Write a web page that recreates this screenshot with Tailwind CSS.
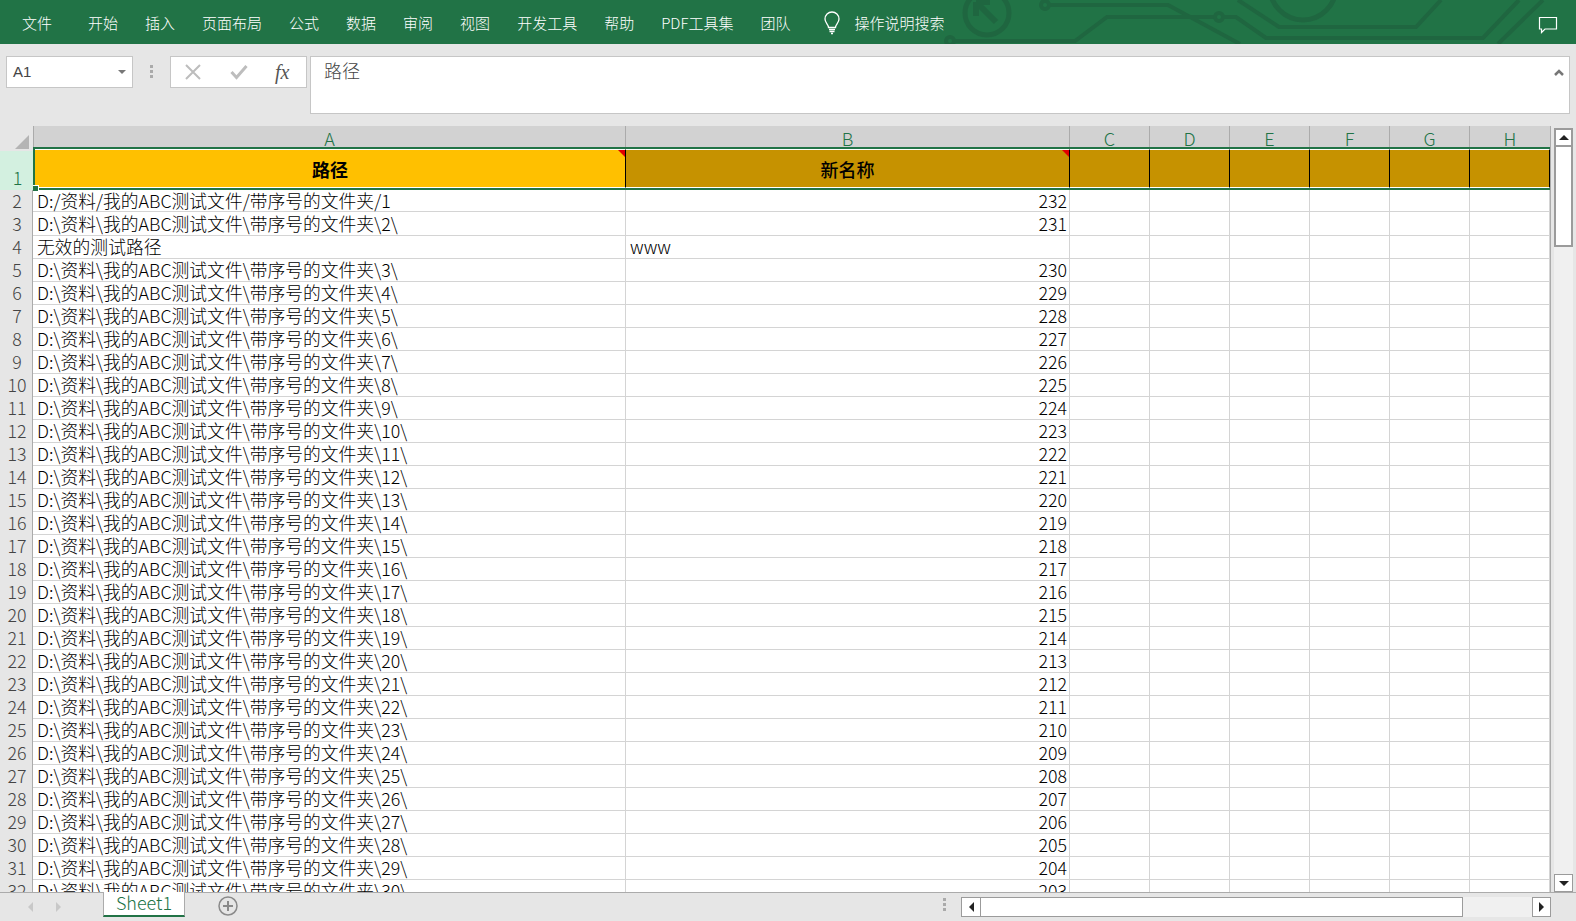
<!DOCTYPE html>
<html lang="zh-CN">
<head>
    <meta charset="UTF-8">
    <meta name="viewport" content="width=device-width, initial-scale=1.0">
    <title>Excel</title>
    <script src="https://cdn.jsdelivr.net/npm/@tailwindcss/browser@4"></script>
</head>
<body class="w-[1576px] h-[921px] overflow-hidden bg-[#e6e6e6] flex flex-col font-['Noto_Sans_CJK_SC',sans-serif] font-light">

    <!-- ribbon tabs -->
    <div class="relative h-[44px] shrink-0 bg-[#217346] text-white text-[15px] flex items-center gap-[27px] pl-[22px] pt-[2px] overflow-hidden">
        <svg class="absolute left-0 top-0" width="1576" height="44" fill="none" stroke="#1f6640" stroke-width="4">
            <circle cx="987" cy="13" r="22" stroke-width="5"/>
            <path d="M976 2h14M976 2v14M976 2l20 20" stroke-width="6"/>
            <circle cx="1045" cy="5" r="4"/>
            <path d="M1049 5H1168L1240 44"/>
            <circle cx="950" cy="41" r="4"/>
            <path d="M954 41H1075L1107 17H1215"/>
            <circle cx="1219" cy="17" r="4"/>
            <path d="M1223 17H1236L1266 38H1483L1519 0"/>
            <path d="M1238 0L1279 27H1416L1441 0"/>
            <circle cx="1303" cy="-13" r="33" stroke-width="5"/>
            <path d="M1543 0L1498 44"/>
        </svg>
        <span class="relative mr-[9px]">文件</span>
        <span class="relative">开始</span>
        <span class="relative">插入</span>
        <span class="relative">页面布局</span>
        <span class="relative">公式</span>
        <span class="relative">数据</span>
        <span class="relative">审阅</span>
        <span class="relative">视图</span>
        <span class="relative">开发工具</span>
        <span class="relative">帮助</span>
        <span class="relative">PDF工具集</span>
        <span class="relative">团队</span>
        <svg class="relative ml-[6px]" width="18" height="24" viewBox="0 0 18 24" fill="none" stroke="white" stroke-width="1.3">
            <path d="M5.5 16.5c0-3-3.500-4.500-3.500-8.500a7 7 0 0 1 14 0c0 4-3.500 5.500-3.500 8.500z"/>
            <path d="M6 18.500h6M6.500 20.500h5M8 22.500h2"/>
        </svg>
        <span class="relative -ml-[14px]">操作说明搜索</span>
        <svg class="absolute left-[1538px] top-[16px]" width="20" height="19" viewBox="0 0 20 19" fill="none" stroke="white" stroke-width="1.2">
            <path d="M1.500 1.500h17v11.500H7l-3.500 3.500v-3.500h-2z"/>
        </svg>
    </div>

    <!-- formula bar -->
    <div class="h-[82px] shrink-0 flex items-start pt-[12px] pl-[6px]">
        <div class="w-[127px] h-[32px] bg-white border border-[#c6c6c6] flex items-center justify-between pl-[6px] pr-[6px] text-[15px] text-[#444] font-['Liberation_Sans',sans-serif] font-normal">
            <span>A1</span>
            <span class="w-0 h-0 border-x-[4px] border-x-transparent border-t-[4px] border-t-[#777]"></span>
        </div>
        <div class="w-[37px] h-[32px] flex flex-col items-center justify-center gap-[2px] pb-[2px]">
            <i class="block w-[3px] h-[3px] bg-[#aaa]"></i>
            <i class="block w-[3px] h-[3px] bg-[#aaa]"></i>
            <i class="block w-[3px] h-[3px] bg-[#aaa]"></i>
        </div>
        <div class="w-[137px] h-[32px] bg-white border border-[#c6c6c6] flex items-center pl-[14px]">
            <svg width="16" height="16" viewBox="0 0 16 16" fill="none" stroke="#bdbdbd" stroke-width="2"><path d="M1 1l14 14M15 1L1 15"/></svg>
            <svg class="ml-[29px]" width="18" height="16" viewBox="0 0 18 16" fill="none" stroke="#bdbdbd" stroke-width="3"><path d="M1.500 8l5 5.500L16.500 2"/></svg>
            <span class="ml-[27px] font-['Liberation_Serif',serif] italic text-[20px] text-[#555] font-normal leading-none">fx</span>
        </div>
        <div class="relative ml-[3px] w-[1260px] h-[58px] bg-white border border-[#c6c6c6] pl-[13px] text-[18px] leading-[26px] text-[#444]">
            路径
            <svg class="absolute right-[5px] top-[12px]" width="10" height="7" viewBox="0 0 10 7" fill="none" stroke="#777" stroke-width="2.500"><path d="M1 6l4-4 4 4"/></svg>
        </div>
    </div>

    <!-- sheet -->
    <div class="h-[766px] shrink-0 flex overflow-hidden">
        <div class="w-[1551px] shrink-0 border-r border-[#ababab] overflow-hidden">
            <!-- column letters -->
            <div class="grid grid-cols-[34px_592px_444px_repeat(6,80px)] h-[21px] text-[#217346] text-[18px] leading-[25px] text-center">
                <div class="relative bg-[#e6e6e6] border-r border-[#ababab]">
                    <span class="absolute right-[4px] bottom-[2px] w-0 h-0 border-l-[14px] border-l-transparent border-b-[14px] border-b-[#b4b4b4]"></span>
                </div>
                <div class="bg-[#d2d2d2] border-r border-[#ababab]">A</div>
                <div class="bg-[#d2d2d2] border-r border-[#ababab]">B</div>
                <div class="bg-[#d2d2d2] border-r border-[#ababab]">C</div>
                <div class="bg-[#d2d2d2] border-r border-[#ababab]">D</div>
                <div class="bg-[#d2d2d2] border-r border-[#ababab]">E</div>
                <div class="bg-[#d2d2d2] border-r border-[#ababab]">F</div>
                <div class="bg-[#d2d2d2] border-r border-[#ababab]">G</div>
                <div class="bg-[#d2d2d2]">H</div>
            </div>
            <!-- row 1, selected -->
            <div class="flex h-[43px]">
                <div class="w-[33px] shrink-0 bg-[#d3f0e0] text-[#217346] text-[18px] text-center flex items-end justify-center leading-[24px] pl-[2px] pb-[1px]">1</div>
                <div class="relative flex-1 border-y-[2px] border-l-[2px] border-[#217346] grid grid-cols-[591px_444px_repeat(6,80px)] text-[18px] font-bold text-black">
                    <div class="relative bg-[#ffc000] border-y border-white border-r border-r-black flex items-center justify-center pt-[1px]">路径
                        <span class="absolute right-0 top-0 w-0 h-0 border-l-[7px] border-l-transparent border-t-[7px] border-t-[#e00000]"></span>
                    </div>
                    <div class="relative bg-[#c69200] border-y border-white border-r border-r-black flex items-center justify-center pt-[1px] font-medium">新名称
                        <span class="absolute right-0 top-0 w-0 h-0 border-l-[7px] border-l-transparent border-t-[7px] border-t-[#e00000]"></span>
                    </div>
                    <div class="bg-[#c69200] border-y border-white border-r border-r-black"></div>
                    <div class="bg-[#c69200] border-y border-white border-r border-r-black"></div>
                    <div class="bg-[#c69200] border-y border-white border-r border-r-black"></div>
                    <div class="bg-[#c69200] border-y border-white border-r border-r-black"></div>
                    <div class="bg-[#c69200] border-y border-white border-r border-r-black"></div>
                    <div class="bg-[#c69200] border-y border-white border-r border-r-black"></div>
                    <span class="absolute -left-[2px] -bottom-[3px] w-[6px] h-[6px] bg-[#217346] border-t border-r border-white"></span>
                </div>
            </div>
            <div id="rows"></div>
        </div>
        <!-- vertical scrollbar -->
        <div class="flex-1 flex flex-col pt-[2px] pl-[3px] pr-[3px]">
            <div class="w-[19px] h-[19px] bg-white border-2 border-[#9b9b9b] flex items-center justify-center">
                <span class="w-0 h-0 border-x-[5px] border-x-transparent border-b-[5px] border-b-[#222]"></span>
            </div>
            <div class="w-[19px] h-[728px] bg-[#f0f0f0] flex flex-col">
                <div class="w-[19px] h-[100px] bg-white border-2 border-t-0 border-[#9b9b9b]"></div>
            </div>
            <div class="w-[19px] h-[18px] bg-white border border-[#9b9b9b] flex items-center justify-center">
                <span class="w-0 h-0 border-x-[5px] border-x-transparent border-t-[5px] border-t-[#222]"></span>
            </div>
        </div>
    </div>

    <!-- sheet tabs and horizontal scrollbar -->
    <div class="relative flex-1 border-t border-[#ababab] flex items-start">
        <span class="ml-[28px] mt-[9px] w-0 h-0 border-y-[5px] border-y-transparent border-r-[5px] border-r-[#c8c8c8]"></span>
        <span class="ml-[23px] mt-[9px] w-0 h-0 border-y-[5px] border-y-transparent border-l-[5px] border-l-[#c8c8c8]"></span>
        <div class="ml-[42px] w-[82px] h-[25px] bg-white border-x border-[#ababab] border-b-2 border-b-[#217346] -mt-px text-[#217346] text-[18px] leading-[20px] text-center">Sheet1</div>
        <svg class="ml-[33px] mt-[3px]" width="20" height="20" viewBox="0 0 20 20" fill="none" stroke="#8a8a8a"><circle cx="10" cy="10" r="9" stroke-width="1.500"/><path d="M10 5v10M5 10h10" stroke-width="2"/></svg>
        <div class="ml-[705px] mt-[5px] w-[3px] flex flex-col gap-[2px]">
            <i class="block w-[3px] h-[3px] bg-[#aaa]"></i>
            <i class="block w-[3px] h-[3px] bg-[#aaa]"></i>
            <i class="block w-[3px] h-[3px] bg-[#aaa]"></i>
        </div>
        <div class="ml-[15px] mt-[4px] w-[590px] h-[20px] flex bg-[#f0f0f0]">
            <div class="w-[20px] h-[20px] bg-white border border-[#9b9b9b] flex items-center justify-center">
                <span class="w-0 h-0 border-y-[5px] border-y-transparent border-r-[5px] border-r-[#222]"></span>
            </div>
            <div class="w-[482px] h-[20px] bg-white border border-l-0 border-[#9b9b9b]"></div>
            <div class="ml-auto w-[19px] h-[20px] bg-white border border-[#9b9b9b] flex items-center justify-center">
                <span class="w-0 h-0 border-y-[5px] border-y-transparent border-l-[5px] border-l-[#222]"></span>
            </div>
        </div>
    </div>

    <script>
        // rows 2-32 of the sheet
        const rowClass = "grid grid-cols-[33px_593px_444px_repeat(6,80px)] h-[23px] leading-[24px] text-[17.8px] text-black bg-white";
        const headClass = "bg-[#e6e6e6] border-r border-b border-[#ababab] text-center text-[#444] pl-[2px]";
        const cellClass = "border-r border-b border-[#d4d4d4] pl-[4px] pr-[2px] whitespace-nowrap";
        let html = "";
        for (let n = 2; n <= 32; n++) {
            let path = "D:\\资料\\我的ABC测试文件\\带序号的文件夹\\" + (n - 2) + "\\";
            let value = 235 - n;
            if (n == 2) { path = "D:/资料/我的ABC测试文件/带序号的文件夹/1"; value = 232; }
            if (n == 3) { path = "D:\\资料\\我的ABC测试文件\\带序号的文件夹\\2\\"; value = 231; }
            if (n == 4) { path = "无效的测试路径"; value = "www"; }
            html += `<div class="${rowClass}"${n == 2 ? ' style="height:21px;line-height:21px"' : ""}>
                <div class="${headClass}">${n}</div>
                <div class="${cellClass}">${path}</div>
                <div class="${cellClass} ${n == 4 ? "text-left" : "text-right"}">${value}</div>
                <div class="${cellClass}"></div><div class="${cellClass}"></div><div class="${cellClass}"></div>
                <div class="${cellClass}"></div><div class="${cellClass}"></div><div class="${cellClass}"></div>
            </div>`;
        }
        document.getElementById("rows").innerHTML = html;
    </script>

</body>
</html>
